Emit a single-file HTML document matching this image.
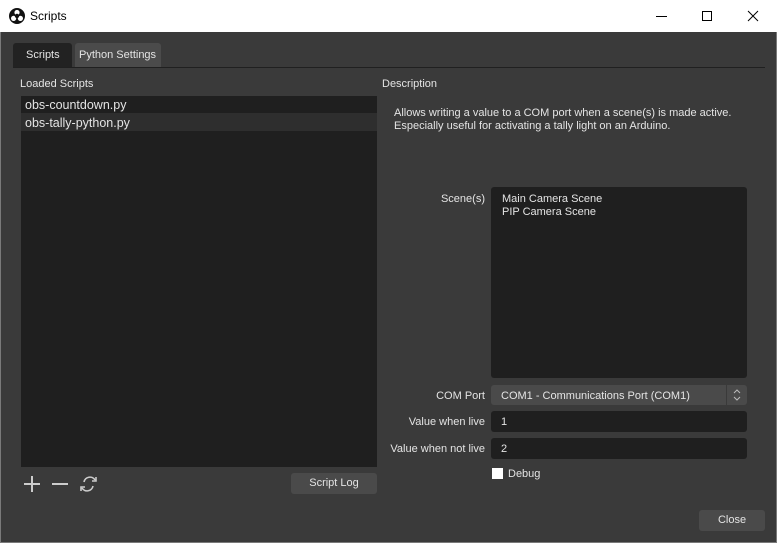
<!DOCTYPE html>
<html><head><meta charset="utf-8"><style>
*{margin:0;padding:0;box-sizing:border-box}
body{width:777px;height:543px;overflow:hidden;background:#3a3a3a;font-family:"Liberation Sans",sans-serif;font-size:11px;color:#e4e4e4;position:relative}
.a{position:absolute}
.win{left:0;top:0;width:777px;height:543px;border:1px solid #7a7a7a}
.title{left:0;top:0;width:777px;height:32px;background:#fff;color:#000}
.t{white-space:nowrap;line-height:16px}
.dark{background:#1f1f1f;border-radius:3px}
.btn{background:#4a4a4a;border-radius:3px;text-align:center;line-height:20px}
.lbl{text-align:right;white-space:nowrap}
</style></head><body>
<div class="a win"></div>
<div class="a title">
  <svg class="a" style="left:9px;top:8px" width="16" height="16" viewBox="0 0 16 16"><circle cx="8" cy="8" r="8" fill="#111"/><circle cx="8" cy="4.5" r="2.6" fill="#fff"/><circle cx="4.6" cy="10.4" r="2.6" fill="#fff"/><circle cx="11.4" cy="10.4" r="2.6" fill="#fff"/><circle cx="8" cy="8" r="2.2" fill="#111"/></svg>
  <div class="a t" style="left:30px;top:8px;font-size:12px">Scripts</div>
  <svg class="a" style="left:650px;top:8px" width="120" height="16" viewBox="0 0 120 16"><path d="M6 8.5h11" stroke="#000" stroke-width="1"/><rect x="52.5" y="3.5" width="9" height="9" fill="none" stroke="#000"/><path d="M98 3l10 10M108 3l-10 10" stroke="#000" stroke-width="1"/></svg>
</div>
<div class="a" style="left:13px;top:43px;width:59px;height:24px;background:#222;border-radius:3px 3px 0 0"></div>
<div class="a t" style="left:26px;top:47px">Scripts</div>
<div class="a" style="left:75px;top:43px;width:86px;height:24px;background:#4b4b4b;border-radius:3px 3px 0 0"></div>
<div class="a t" style="left:79px;top:47px">Python Settings</div>
<div class="a" style="left:13px;top:67px;width:752px;height:1px;background:#202020"></div>
<div class="a t" style="left:20px;top:76px">Loaded Scripts</div>
<div class="a" style="left:21px;top:96px;width:356px;height:371px;background:#1f1f1f"></div>
<div class="a" style="left:21px;top:113px;width:356px;height:18px;background:#2e2e2e"></div>
<div class="a t" style="left:25px;top:97px;font-size:12.5px">obs-countdown.py</div>
<div class="a t" style="left:25px;top:115px;font-size:12.5px">obs-tally-python.py</div>
<svg class="a" style="left:22px;top:474px" width="80" height="20" viewBox="0 0 80 20"><path d="M10 2v16M2 10h16" stroke="#ccc" stroke-width="2"/><path d="M30 10h16" stroke="#ccc" stroke-width="2"/><path d="M73 6a6 6 0 0 0-11 2M60 14a6 6 0 0 0 11-2" fill="none" stroke="#ccc" stroke-width="1.6"/><path d="M74 3v4h-4M59 17v-4h4" fill="none" stroke="#ccc" stroke-width="1.6"/></svg>
<div class="a btn" style="left:291px;top:473px;width:86px;height:21px">Script Log</div>
<div class="a t" style="left:382px;top:76px">Description</div>
<div class="a t" style="left:394px;top:107px;line-height:13px">Allows writing a value to a COM port when a scene(s) is made active.<br>Especially useful for activating a tally light on an Arduino.</div>
<div class="a lbl t" style="right:292px;top:191px">Scene(s)</div>
<div class="a dark" style="left:491px;top:187px;width:256px;height:191px"></div>
<div class="a t" style="left:502px;top:193px;line-height:13px">Main Camera Scene<br>PIP Camera Scene</div>
<div class="a lbl t" style="right:292px;top:388px">COM Port</div>
<div class="a" style="left:491px;top:385px;width:256px;height:20px;background:#4a4a4a;border-radius:3px"></div>
<div class="a" style="left:726px;top:385px;width:1px;height:20px;background:#3a3a3a"></div>
<svg class="a" style="left:731px;top:388px" width="12" height="14" viewBox="0 0 12 14"><path d="M3 5l3-3 3 3M3 9l3 3 3-3" fill="none" stroke="#bbb"/></svg>
<div class="a t" style="left:501px;top:388px">COM1 - Communications Port (COM1)</div>
<div class="a lbl t" style="right:292px;top:414px">Value when live</div>
<div class="a dark" style="left:491px;top:411px;width:256px;height:21px"></div>
<div class="a t" style="left:501px;top:414px">1</div>
<div class="a lbl t" style="right:292px;top:441px">Value when not live</div>
<div class="a dark" style="left:491px;top:438px;width:256px;height:21px"></div>
<div class="a t" style="left:501px;top:441px">2</div>
<div class="a" style="left:492px;top:468px;width:11px;height:11px;background:#fff"></div>
<div class="a t" style="left:508px;top:466px">Debug</div>
<div class="a btn" style="left:699px;top:510px;width:66px;height:21px">Close</div>
</body></html>
